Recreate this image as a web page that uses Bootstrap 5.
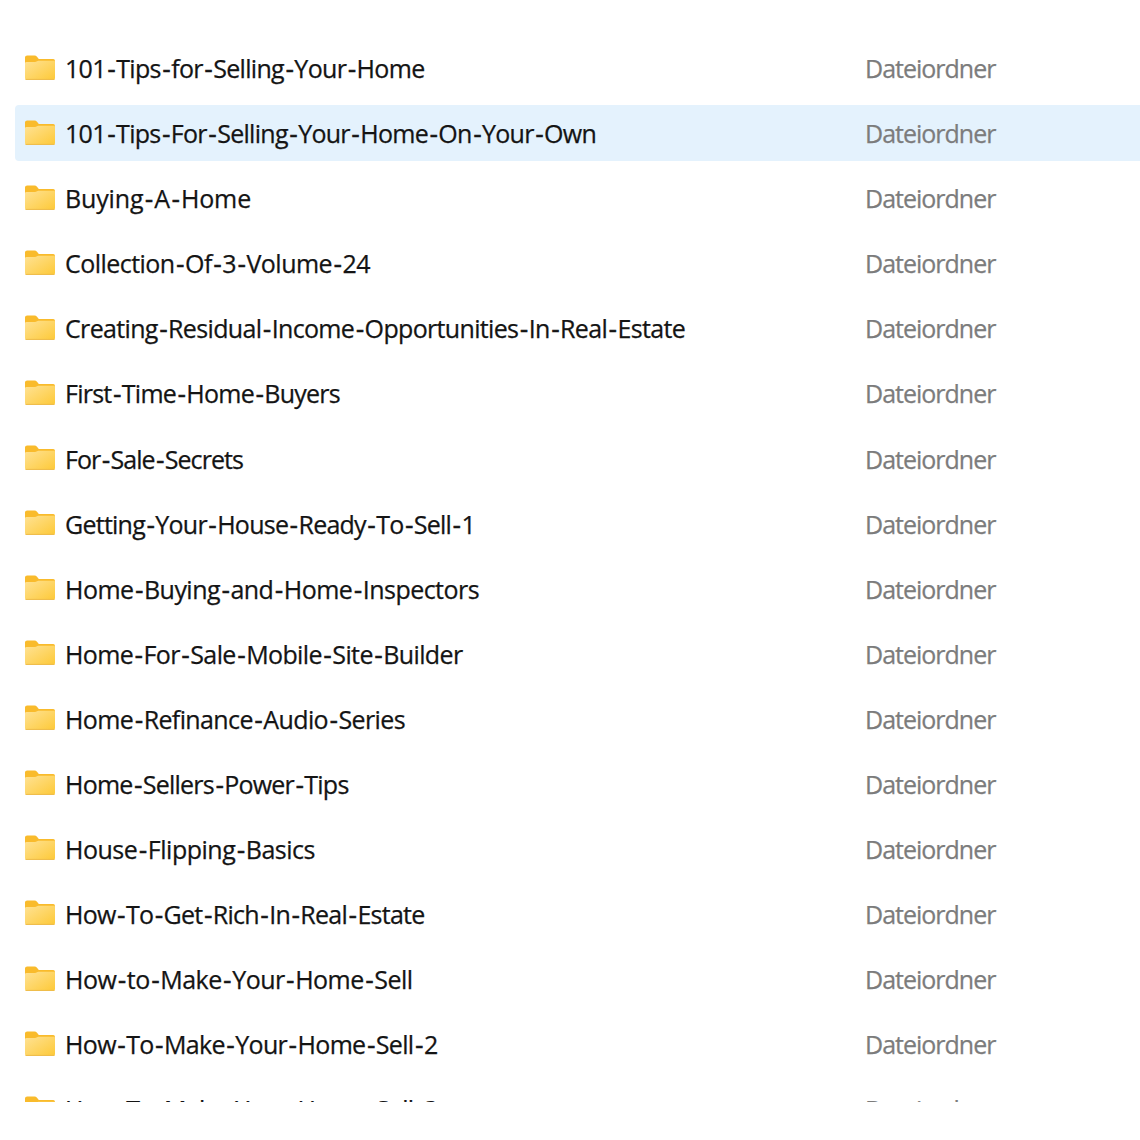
<!DOCTYPE html>
<html lang="de">
<head>
<meta charset="utf-8">
<title>Dateiordner</title>
<link rel="stylesheet" href="https://cdn.jsdelivr.net/npm/bootstrap@5.3.0/dist/css/bootstrap.min.css">
<style>
body { font-family: "Open Sans", "Noto Sans", sans-serif; font-size: 25px; background: #fff; overflow: hidden; }
.file-pane { height: 1102px; padding: 35.9px 0 0 15px; }
.file-row { height: 65.07px; padding: 4px 0; color: #141414; }
.file-cell { height: 56.5px; padding-left: 9px; border-radius: 4px 0 0 4px; line-height: 56px; white-space: nowrap; -webkit-text-stroke: .25px currentColor; }
.file-cell.hovered { background: #e4f2fd; }
.file-icon { width: 32px; height: 28px; margin-right: 9px; margin-top: -1px; }
.file-name { width: 800px; }
.file-name i { font-style: normal; padding: 0 1.3px 0 1.7px; -webkit-text-stroke-width: .6px; }
.file-type { color: #7c7c7c; letter-spacing: -1px; }
</style>
</head>
<body>
<svg width="0" height="0" class="position-absolute" aria-hidden="true">
  <defs>
    <linearGradient id="front" x1="0" y1="0" x2="1" y2="1"><stop offset="0" stop-color="#ffe294"/><stop offset="1" stop-color="#fdc937"/></linearGradient>
    <symbol id="folder" viewBox="0 0 32 28">
      <path d="M1 3.2Q1 1.5 3.2 1.5H10.5Q12 1.5 13 2.8L14.8 5H29.2Q31 5 31 7V12H1Z" fill="#f9bb2c"/>
      <path d="M1 9.2Q1 8 2.5 8H11Q12 8 13 7.3L14.3 6.7H30Q31 6.7 31 8V24Q31 26 29.5 26H2.5Q1 26 1 24Z" fill="url(#front)"/>
      <path d="M1.6 25.4H30.4" stroke="#edbb4c" stroke-width="1"/>
    </symbol>
  </defs>
</svg>
<main class="file-pane overflow-hidden" id="files"></main>
<script src="https://cdn.jsdelivr.net/npm/bootstrap@5.3.0/dist/js/bootstrap.bundle.min.js"></script>
<script>
// Folder name and the width of its label in pixels
const folders = [
  ["101-Tips-for-Selling-Your-Home", 359.5],
  ["101-Tips-For-Selling-Your-Home-On-Your-Own", 531],
  ["Buying-A-Home", 186],
  ["Collection-Of-3-Volume-24", 305],
  ["Creating-Residual-Income-Opportunities-In-Real-Estate", 620],
  ["First-Time-Home-Buyers", 275],
  ["For-Sale-Secrets", 178],
  ["Getting-Your-House-Ready-To-Sell-1", 410],
  ["Home-Buying-and-Home-Inspectors", 414],
  ["Home-For-Sale-Mobile-Site-Builder", 397.5],
  ["Home-Refinance-Audio-Series", 340],
  ["Home-Sellers-Power-Tips", 283.5],
  ["House-Flipping-Basics", 250],
  ["How-To-Get-Rich-In-Real-Estate", 359.5],
  ["How-to-Make-Your-Home-Sell", 347.5],
  ["How-To-Make-Your-Home-Sell-2", 372.5],
  ["How-To-Make-Your-Home-Sell-3", 372.5]
];
document.getElementById("files").innerHTML = folders.map(([n], i) => `
<div class="file-row"><div class="file-cell d-flex align-items-center${i === 1 ? " hovered" : ""}">
<svg class="file-icon flex-shrink-0"><use href="#folder"/></svg><div class="file-name flex-shrink-0"><span>${n.replace(/-/g, "<i>-</i>")}</span></div><div class="file-type">Dateiordner</div></div></div>`).join("");
// Spread the letters so that each label fills its width
document.querySelectorAll(".file-name > span").forEach((el, i) => {
  const [n, w] = folders[i];
  el.style.letterSpacing = (w - el.getBoundingClientRect().width) / n.length + "px";
});
</script>
</body>
</html>
